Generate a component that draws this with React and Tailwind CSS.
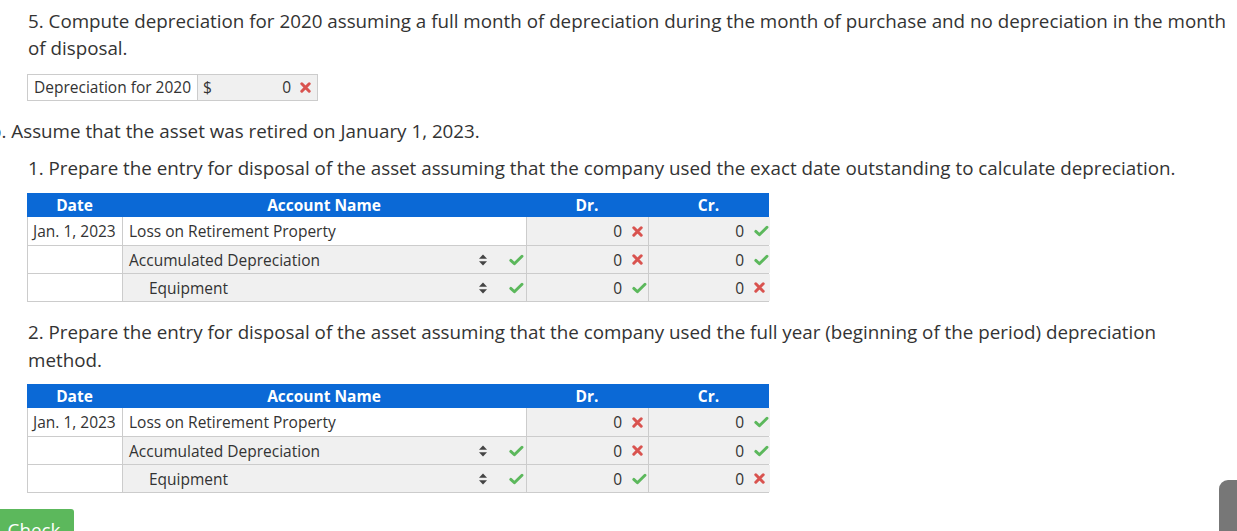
import React from "react";

const Check = () => (
  <svg width="15" height="12" viewBox="0 0 15 12" className="block">
    <path d="M1.8 6.4 L5.4 9.8 L13 2.2" fill="none" stroke="#5cb85c" strokeWidth="2.9" strokeLinecap="round" strokeLinejoin="round" />
  </svg>
);

const Cross = () => (
  <svg width="11" height="11" viewBox="0 0 11 11" className="block">
    <path d="M1.8 1.8 L9.2 9.2 M9.2 1.8 L1.8 9.2" fill="none" stroke="#d9534f" strokeWidth="3" strokeLinecap="round" />
  </svg>
);

const Sort = () => (
  <svg width="10" height="14" viewBox="0 0 10 14" className="block">
    <path d="M5 1.5 L9 5.8 L1 5.8 Z" fill="#444" />
    <path d="M1 8.2 L9 8.2 L5 12.5 Z" fill="#444" />
  </svg>
);

const Amount = ({ ok }) => (
  <div className="flex h-full items-center justify-end bg-[#f0f0f0]">
    <span className="mr-[10px]">0</span>
    <span className="flex w-[16px] items-center">{ok ? <Check /> : <Cross />}</span>
  </div>
);

const rows = [
  { date: "Jan. 1, 2023", name: "Loss on Retirement Property", indent: false, first: true, dr: false, cr: true },
  { date: "", name: "Accumulated Depreciation", indent: false, first: false, dr: false, cr: true },
  { date: "", name: "Equipment", indent: true, first: false, dr: true, cr: false },
];

const Journal = () => (
  <div className="ml-[-1px] w-[742px] border-b border-[#ccc] text-[15.5px] leading-[20px]">
    <div className="grid h-[24px] grid-cols-[95px_404px_122px_121px] bg-[#0b69d6] font-bold text-white">
      <div className="flex items-center justify-center">Date</div>
      <div className="flex items-center justify-center">Account Name</div>
      <div className="flex items-center justify-center">Dr.</div>
      <div className="flex items-center justify-center">Cr.</div>
    </div>
    {rows.map((r, i) => (
      <div
        key={i}
        className={`grid h-[28px] grid-cols-[95px_404px_122px_121px] border-l border-r border-[#ccc] ${i > 0 ? "border-t" : ""}`}
      >
        <div className="flex items-center border-r border-[#ccc] bg-white pl-[5px]">{r.date}</div>
        <div
          className={`flex items-center border-r border-[#ccc] ${r.first ? "bg-white" : "bg-[#f0f0f0]"} ${r.indent ? "pl-[26px]" : "pl-[6px]"}`}
        >
          <span className="flex-1">{r.name}</span>
          {!r.first && (
            <span className="flex items-center pr-[2px]">
              <span className="mr-[21px] flex items-center"><Sort /></span>
              <Check />
            </span>
          )}
        </div>
        <div className="border-r border-[#ccc]">
          <Amount ok={r.dr} />
        </div>
        <div>
          <Amount ok={r.cr} />
        </div>
      </div>
    ))}
  </div>
);

export default function App() {
  return (
    <div className="relative h-[531px] w-[1237px] overflow-hidden bg-white font-['Open_Sans',sans-serif] text-[#333]">
      <div className="pl-[28px] pr-[8px] pt-[8px]">
        <p className="text-[18.8px] leading-[27px]">
          5. Compute depreciation for 2020 assuming a full month of depreciation during the month of purchase and no depreciation in the month of disposal.
        </p>
        <div className="ml-[-1px] mt-[12px] flex h-[27px] w-[291px] border border-[#ccc] text-[15.5px]">
          <div className="flex w-[170px] items-center border-r border-[#ccc] pl-[6px]">Depreciation for 2020</div>
          <div className="flex flex-1 items-center bg-[#f0f0f0] pl-[5px] pr-[6px]">
            <span className="flex-1">$</span>
            <span className="mr-[9px]">0</span>
            <Cross />
          </div>
        </div>
        <p className="ml-[-38px] mt-[17px] text-[18.8px] leading-[27px]">b. Assume that the asset was retired on January 1, 2023.</p>
        <p className="mt-[10px] text-[18.8px] leading-[27px]">
          1. Prepare the entry for disposal of the asset assuming that the company used the exact date outstanding to calculate depreciation.
        </p>
        <div className="mt-[11px]">
          <Journal />
        </div>
        <p className="mt-[16px] pr-[60px] text-[18.8px] leading-[28px]">
          2. Prepare the entry for disposal of the asset assuming that the company used the full year (beginning of the period) depreciation method.
        </p>
        <div className="mt-[10px]">
          <Journal />
        </div>
      </div>
      <div className="ml-[-6px] mt-[16px] flex h-[34px] w-[80px] items-start justify-center rounded-[3px] bg-[#5cb85c] pt-[7px] text-[18.8px] text-white">
        Check
      </div>
      <div className="absolute left-[1219px] top-[480px] h-[60px] w-[30px] rounded-tl-[9px] bg-[#777]" />
    </div>
  );
}
